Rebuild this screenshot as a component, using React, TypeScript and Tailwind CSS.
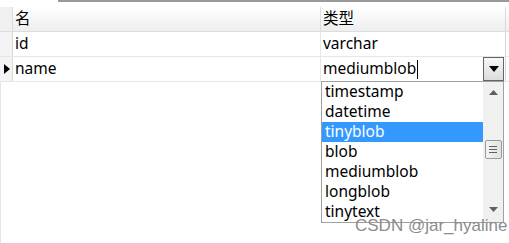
import React from 'react';

const items = ['timestamp', 'datetime', 'tinyblob', 'blob', 'mediumblob', 'longblob', 'tinytext'];

function Row({ name, type, current, editing }: { name: string; type: string; current?: boolean; editing?: boolean }) {
	return (
		<div className="flex h-[25px] border-b border-[#e6e6e6]">
			<div className="w-[13px] shrink-0 border-r border-[#d9d9d9] bg-[#f4f4f4] flex items-center">
				{current && (
					<svg width="6" height="10" viewBox="0 0 6 10" className="ml-[4px]">
						<path d="M0 0 L6 5 L0 10 Z" fill="#000" />
					</svg>
				)}
			</div>
			<div className="w-[308px] shrink-0 border-r border-[#e6e6e6] pl-[2px] flex items-center">{name}</div>
			<div className="w-[185px] shrink-0 border-r border-[#d9d9d9] pl-[2px] flex items-center relative">
				{editing ? (
					<>
						<span>{type}</span>
						<span className="w-px h-[19px] bg-black ml-[1px]" />
						<div className="absolute right-[1px] top-0 w-[21px] h-[24px] border border-[#646464] bg-gradient-to-b from-[#f7f7f7] to-[#dcdcdc] flex items-center justify-center">
							<svg width="10" height="6" viewBox="0 0 10 6">
								<path d="M0 0 L10 0 L5 6 Z" fill="#000" />
							</svg>
						</div>
					</>
				) : (
					type
				)}
			</div>
		</div>
	);
}

export default function App() {
	return (
		<div
			className="relative w-[509px] h-[243px] bg-white overflow-hidden text-[15.5px] text-black"
			style={{ fontFamily: '"Noto Sans", "Noto Sans CJK SC", sans-serif' }}
		>
			<div className="h-[7px] flex">
				<div className="w-[58px]" />
				<div className="flex-1 h-[2px] bg-[#9a9a9a]" />
			</div>
			<div className="flex h-[25px] border-b border-[#dcdcdc] bg-gradient-to-b from-[#ffffff] to-[#eeeeee]">
				<div className="w-[13px] shrink-0 border-r border-[#d9d9d9] bg-[#f0f0f0]" />
				<div className="w-[308px] shrink-0 border-r border-[#e0e0e0] pl-[2px] flex items-center">名</div>
				<div className="w-[185px] shrink-0 border-r border-[#d9d9d9] pl-[2px] flex items-center">类型</div>
			</div>
			<Row name="id" type="varchar" />
			<Row name="name" type="mediumblob" current editing />
			<div className="h-full border-l border-[#e6e6e6]" />

			<div className="absolute left-[321px] top-[81px] w-[183px] h-[142px] border border-[#a0a0a0] bg-white flex">
				<div className="flex-1 flex flex-col">
					{items.map((it) => (
						<div
							key={it}
							className={`h-[20px] shrink-0 pl-[3px] flex items-center ${it === 'tinyblob' ? 'bg-[#3399ff] text-white' : ''}`}
						>
							{it}
						</div>
					))}
				</div>
				<div className="w-[20px] shrink-0 bg-[#f0f0f0] flex flex-col items-center">
					<svg width="9" height="5" viewBox="0 0 9 5" className="mt-[8px]">
						<path d="M0 5 L4.5 0 L9 5 Z" fill="#606060" />
					</svg>
					<div className="mt-[45px] w-[17px] h-[19px] border border-[#9a9a9a] rounded-[2px] bg-gradient-to-r from-[#f4f4f4] to-[#e2e2e2] flex flex-col items-center justify-center gap-[2px]">
						<div className="w-[8px] h-px bg-[#606060]" />
						<div className="w-[8px] h-px bg-[#606060]" />
						<div className="w-[8px] h-px bg-[#606060]" />
					</div>
					<svg width="9" height="5" viewBox="0 0 9 5" className="mt-auto mb-[10px]">
						<path d="M0 0 L9 0 L4.5 5 Z" fill="#606060" />
					</svg>
				</div>
			</div>

			<div
				className="absolute left-[355px] top-[217px] text-[17px] leading-none text-[#8c8c8c]"
				style={{ fontFamily: '"Liberation Sans", Arial, sans-serif' }}
			>
				CSDN @jar_hyaline
			</div>
		</div>
	);
}
